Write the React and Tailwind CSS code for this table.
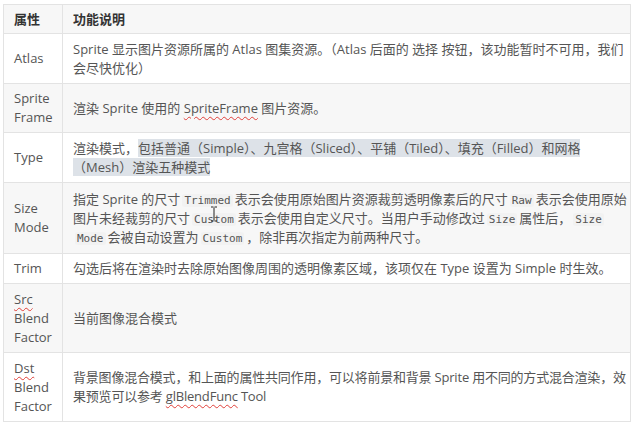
import React from "react";

const Code = ({ children }) => (
  <code className="mx-[2px] rounded-[3px] bg-[#f2f2f2] px-[2px] font-['DejaVu_Sans_Mono','Liberation_Mono',monospace] text-[11px] leading-[14px] text-[#555]">
    {children}
  </code>
);

const Typo = ({ children }) => (
  <span className="underline decoration-wavy decoration-[#e0403a] decoration-1 underline-offset-[3px]">
    {children}
  </span>
);

const rows = [
  {
    key: "atlas",
    h: "h-[50px]",
    name: ["Atlas"],
    desc: (
      <>
        Sprite 显示图片资源所属的 Atlas 图集资源。（Atlas 后面的 选择 按钮，该功能暂时不可用，我们
        <br />
        会尽快优化）
      </>
    ),
  },
  {
    key: "frame",
    h: "h-[49px]",
    name: ["Sprite", "Frame"],
    desc: (
      <>
        渲染 Sprite 使用的 <Typo>SpriteFrame</Typo> 图片资源。
      </>
    ),
  },
  {
    key: "type",
    h: "h-[50px]",
    name: ["Type"],
    desc: (
      <>
        渲染模式，
        <span className="bg-[#dde2e8] [box-decoration-break:clone]">
          包括普通（Simple）、九宫格（Sliced）、平铺（Tiled）、填充（Filled）和网格
          <br />
          （Mesh）渲染五种模式
        </span>
      </>
    ),
  },
  {
    key: "size",
    h: "h-[71px]",
    name: ["Size", "Mode"],
    desc: (
      <>
        指定 Sprite 的尺寸<Code>Trimmed</Code>表示会使用原始图片资源裁剪透明像素后的尺寸<Code>Raw</Code>表示会使用原始
        <br />
        图片未经裁剪的尺寸
        <span className="relative">
          <Code>Custom</Code>
          <svg className="absolute left-[20px] top-[-3px]" width="8" height="16" viewBox="0 0 8 16">
            <path d="M1 1h2.5M4.5 1H7M4 1.5v13M1 15h2.5M4.5 15H7" stroke="#222" strokeWidth="1" fill="none" />
          </svg>
        </span>
        表示会使用自定义尺寸。当用户手动修改过<Code>Size</Code>属性后，<Code>Size</Code>
        <br />
        <Code>Mode</Code>会被自动设置为<Code>Custom</Code>，除非再次指定为前两种尺寸。
      </>
    ),
  },
  {
    key: "trim",
    h: "h-[30px]",
    name: ["Trim"],
    desc: <>勾选后将在渲染时去除原始图像周围的透明像素区域，该项仅在 Type 设置为 Simple 时生效。</>,
  },
  {
    key: "src",
    h: "h-[69px]",
    name: [<Typo key="s">Src</Typo>, "Blend", "Factor"],
    desc: <>当前图像混合模式</>,
  },
  {
    key: "dst",
    h: "h-[69px]",
    name: [<Typo key="d">Dst</Typo>, "Blend", "Factor"],
    desc: (
      <span className="tracking-[-0.2px]">
        背景图像混合模式，和上面的属性共同作用，可以将前景和背景 Sprite 用不同的方式混合渲染，效
        <br />
        果预览可以参考 <Typo>glBlendFunc</Typo> Tool
      </span>
    ),
  },
];

export default function App() {
  return (
    <div className="min-h-screen bg-white pl-[3px] pt-[4px] font-['Open_Sans','Noto_Sans_CJK_SC',sans-serif] text-[13px] leading-[19px] text-[#555]">
      <table className="w-[628px] table-fixed border-collapse border border-[#e3e3e3]">
        <thead>
          <tr className="h-[29px] bg-[#f7f7f7]">
            <th className="w-[59px] border border-[#e3e3e3] px-[10px] py-0 text-left font-bold text-[#333]">
              属性
            </th>
            <th className="border border-[#e3e3e3] px-[10px] py-0 text-left font-bold text-[#333]">
              功能说明
            </th>
          </tr>
        </thead>
        <tbody>
          {rows.map((r, i) => (
            <tr key={r.key} className={`${r.h} ${i % 2 === 1 ? "bg-[#f7f7f7]" : "bg-white"}`}>
              <td className="border border-[#e3e3e3] px-[10px] py-0 align-middle">
                {r.name.map((n, j) => (
                  <div key={j}>{n}</div>
                ))}
              </td>
              <td className="whitespace-nowrap border border-[#e3e3e3] px-[10px] py-0 align-middle">
                {r.desc}
              </td>
            </tr>
          ))}
        </tbody>
      </table>
    </div>
  );
}
